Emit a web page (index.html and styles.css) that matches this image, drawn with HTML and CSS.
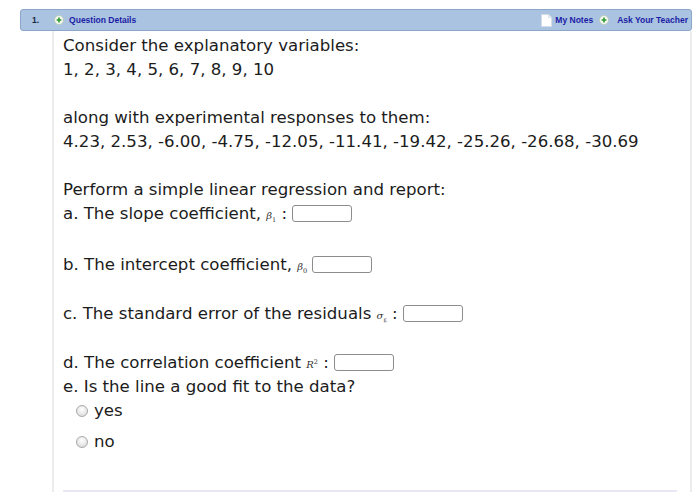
FILE: index.html
```html
<!DOCTYPE html>
<html>
<head>
<meta charset="utf-8">
<link rel="stylesheet" href="styles.css">
</head>
<body>
<div class="page">
  <div class="header">
    <div class="hleft">
      <span class="num">1.</span>
      <span class="plus"><svg width="10" height="10" viewBox="0 0 10 10"><circle cx="5" cy="5" r="4.5" fill="#f4f8f2" stroke="#b9c8b0" stroke-width="0.8"/><path d="M5 2.6v4.8M2.6 5h4.8" stroke="#2f9a2f" stroke-width="1.6"/></svg></span>
      <span class="hlink">Question Details</span>
    </div>
    <div class="hright">
      <span class="doc"><svg width="11" height="13" viewBox="0 0 11 13"><path d="M0.5 0.5h7l3 3v9h-10z" fill="#fff" stroke="#d4dbe4" stroke-width="0.8"/><path d="M7.5 0.5v3h3" fill="#eef1f5" stroke="#d4dbe4" stroke-width="0.8"/></svg></span>
      <span class="hlink notes">My Notes</span>
      <span class="plus"><svg width="10" height="10" viewBox="0 0 10 10"><circle cx="5" cy="5" r="4.5" fill="#f4f8f2" stroke="#b9c8b0" stroke-width="0.8"/><path d="M5 2.6v4.8M2.6 5h4.8" stroke="#2f9a2f" stroke-width="1.6"/></svg></span>
      <span class="hlink ask">Ask Your Teacher</span>
    </div>
  </div>
  <div class="content">
    <p class="para">Consider the explanatory variables:<br>1, 2, 3, 4, 5, 6, 7, 8, 9, 10</p>
    <p class="para">along with experimental responses to them:<br>4.23, 2.53, -6.00, -4.75, -12.05, -11.41, -19.42, -25.26, -26.68, -30.69</p>
    <p class="para">Perform a simple linear regression and report:<br>a. The slope coefficient, <span class="sym">β<sub>1</sub></span> : <span class="box"></span></p>
    <p class="q qb">b. The intercept coefficient, <span class="sym">β<sub>0</sub></span> <span class="box"></span></p>
    <p class="q qc">c. The standard error of the residuals <span class="sym">σ<sub>ε</sub></span> : <span class="box"></span></p>
    <p class="q qd">d. The correlation coefficient <span class="sym">R<sup>2</sup></span> : <span class="box"></span><br>e. Is the line a good fit to the data?</p>
    <div class="opt"><span class="radio"></span>yes</div>
    <div class="opt opt2"><span class="radio"></span>no</div>
    <div class="foot"></div>
  </div>
</div>
</body>
</html>
```

FILE: styles.css
```css
html, body {
  margin: 0;
  padding: 0;
  background: #fff;
}
.page {
  width: 700px;
  height: 492px;
  padding-top: 9px;
  box-sizing: border-box;
}
.header {
  margin-left: 20px;
  width: 672px;
  height: 22px;
  box-sizing: border-box;
  background: #a9c3e0;
  border: 1px solid #8aa7c9;
  border-radius: 3px;
  display: flex;
  align-items: center;
  justify-content: space-between;
  font-family: "Liberation Sans", Arial, sans-serif;
  font-weight: bold;
  font-size: 8.5px;
  color: #1c1ca6;
}
.hleft, .hright {
  display: flex;
  align-items: center;
}
.num {
  color: #1a2740;
  margin-left: 11px;
  margin-right: 15px;
}
.plus {
  display: flex;
  margin-right: 5px;
}
.hright .plus { margin-right: 8px; }
.plus svg, .doc svg { display: block; }
.doc {
  display: flex;
  margin-right: 3px;
}
.notes { margin-right: 6px; }
.ask { margin-right: 3px; }
.content {
  margin-left: 52px;
  width: 640px;
  height: 461px;
  box-sizing: border-box;
  border-left: 2px solid #ececec;
  border-right: 2px solid #ececec;
  padding: 3px 0 0 9px;
  font-family: "DejaVu Sans", Verdana, sans-serif;
  font-size: 16.6px;
  line-height: 24px;
  color: #1c1c1c;
  position: relative;
}
.para {
  margin: 0 0 24px 0;
}
.q { margin: 0; }
.para + .q.qb { margin-top: 27px; }
.qc { margin-top: 25px; }
.qd { margin-top: 25px; }
.sym {
  font-family: "DejaVu Serif", "Liberation Serif", serif;
  font-style: italic;
  font-size: 10px;
  line-height: 1;
  color: #333;
}
.sym sub, .sym sup {
  font-size: 6.5px;
  font-style: normal;
  line-height: 0;
}
.box {
  display: inline-block;
  width: 58px;
  height: 15px;
  border: 1px solid #8d8d8d;
  border-radius: 3px;
  vertical-align: -3px;
  background: #fff;
  line-height: 0;
}
.opt {
  display: flex;
  align-items: center;
  height: 24px;
  margin-left: 13px;
}
.opt2 { margin-top: 7px; }
.radio {
  width: 12px;
  height: 12px;
  border-radius: 50%;
  box-sizing: border-box;
  border: 1px solid #a9a9a9;
  background: radial-gradient(circle at 50% 35%, #ffffff 0%, #e6e6e6 60%, #cfcfcf 100%);
  margin-right: 6px;
}
.foot {
  position: absolute;
  left: 9px;
  bottom: 0;
  width: 614px;
  height: 2px;
  background: #e8e8f4;
}
```
